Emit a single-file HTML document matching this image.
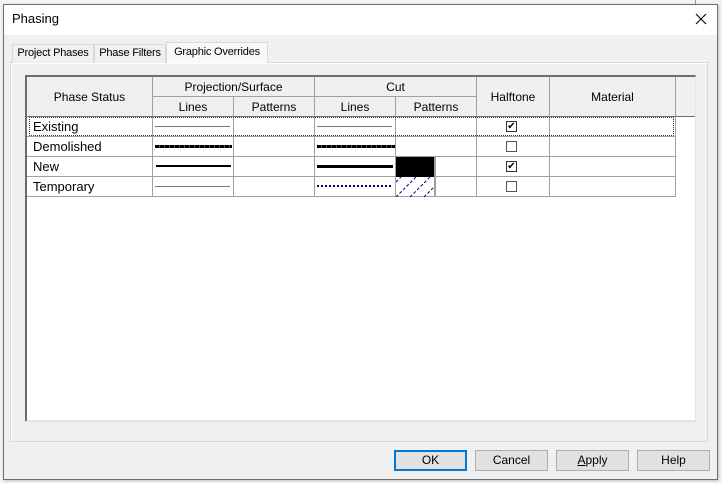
<!DOCTYPE html>
<html><head><style>
*{margin:0;padding:0;box-sizing:border-box}
body{width:722px;height:483px;background:#f3f3f3;position:relative;overflow:hidden;font-family:"Segoe UI","Liberation Sans",sans-serif;font-size:12px;color:#000}
.a{position:absolute}
.dlg{left:3px;top:4px;width:715px;height:476px;border:1px solid #6d6d6d;background:#f0f0f0;box-shadow:1px 1px 3px rgba(0,0,0,.2)}
.title{left:4px;top:5px;width:713px;height:30px;background:#fff}
.tab{top:44px;height:19px;border:1px solid #d9d9d9;border-bottom:none;background:#f0f0f0;text-align:center;line-height:17px;font-size:11px;letter-spacing:-0.2px}
.panel{left:10px;top:62px;width:698px;height:380px;border:1px solid #d9d9d9;background:#f0f0f0;box-shadow:inset 1px 1px 0 #fff}
.grid{left:25px;top:75px;width:671px;height:347px;border-left:2px solid #6d6d6d;border-top:2px solid #6d6d6d;border-right:1px solid #e3e3e3;border-bottom:2px solid #e3e3e3;background:#fff}
.h{background:#f0f0f0;border-right:1px solid #a0a0a0;border-bottom:1px solid #a0a0a0;text-align:center;font-size:12px}
.c{border-right:1px solid #a0a0a0;border-bottom:1px solid #a0a0a0;background:#fff}
.btn{top:450px;width:73px;height:21px;border:1px solid #adadad;background:#e1e1e1;text-align:center;line-height:19px;font-size:12px}
.cb{width:11px;height:11px;border:1px solid #333;background:#fff;font-size:10px;line-height:9px;text-align:center}
.ln{position:absolute}
</style></head><body>
<div class="a" style="left:695px;top:0;width:1px;height:4px;background:#999"></div>
<div class="a dlg"></div>
<div class="a title"></div>
<div class="a" style="left:12px;top:11px;font-size:13px">Phasing</div>
<svg class="a" style="left:695px;top:13px" width="12" height="12"><path d="M1 1L11 11M11 1L1 11" stroke="#000" stroke-width="1.1"/></svg>
<div class="a panel"></div>
<div class="a tab" style="left:12px;width:82px">Project Phases</div>
<div class="a tab" style="left:94px;width:72px">Phase Filters</div>
<div class="a tab" style="left:166px;top:42px;height:21px;width:102px;background:#f9f9f9;line-height:18px">Graphic Overrides</div>
<div class="a grid"></div>
<div class="a h" style="left:27px;top:77px;width:126px;height:40px;line-height:40px;border-bottom:1px solid #6d6d6d">Phase Status</div>
<div class="a h" style="left:153px;top:77px;width:162px;height:20px;line-height:20px">Projection/Surface</div>
<div class="a h" style="left:153px;top:97px;width:81px;height:20px;line-height:20px;border-bottom:1px solid #6d6d6d">Lines</div>
<div class="a h" style="left:234px;top:97px;width:81px;height:20px;line-height:20px;border-bottom:1px solid #6d6d6d">Patterns</div>
<div class="a h" style="left:315px;top:77px;width:162px;height:20px;line-height:20px">Cut</div>
<div class="a h" style="left:315px;top:97px;width:81px;height:20px;line-height:20px;border-bottom:1px solid #6d6d6d">Lines</div>
<div class="a h" style="left:396px;top:97px;width:81px;height:20px;line-height:20px;border-bottom:1px solid #6d6d6d">Patterns</div>
<div class="a h" style="left:477px;top:77px;width:73px;height:40px;line-height:40px;border-bottom:1px solid #6d6d6d">Halftone</div>
<div class="a h" style="left:550px;top:77px;width:126px;height:40px;line-height:40px;border-bottom:1px solid #6d6d6d">Material</div>
<div class="a h" style="left:676px;top:77px;width:19px;height:40px;border-right:none;border-bottom:1px solid #6d6d6d"></div>
<div class="a" style="left:27px;top:117px">
<div class="a c" style="left:0;top:0;width:126px;height:20px"></div><div class="a c" style="left:126px;top:0;width:81px;height:20px"></div><div class="a c" style="left:207px;top:0;width:81px;height:20px"></div><div class="a c" style="left:288px;top:0;width:81px;height:20px"></div><div class="a c" style="left:369px;top:0;width:81px;height:20px"></div><div class="a c" style="left:450px;top:0;width:73px;height:20px"></div><div class="a c" style="left:523px;top:0;width:126px;height:20px"></div>
<div class="a c" style="left:0;top:20px;width:126px;height:20px"></div><div class="a c" style="left:126px;top:20px;width:81px;height:20px"></div><div class="a c" style="left:207px;top:20px;width:81px;height:20px"></div><div class="a c" style="left:288px;top:20px;width:81px;height:20px"></div><div class="a c" style="left:369px;top:20px;width:81px;height:20px"></div><div class="a c" style="left:450px;top:20px;width:73px;height:20px"></div><div class="a c" style="left:523px;top:20px;width:126px;height:20px"></div>
<div class="a c" style="left:0;top:40px;width:126px;height:20px"></div><div class="a c" style="left:126px;top:40px;width:81px;height:20px"></div><div class="a c" style="left:207px;top:40px;width:81px;height:20px"></div><div class="a c" style="left:288px;top:40px;width:81px;height:20px"></div><div class="a c" style="left:369px;top:40px;width:81px;height:20px"></div><div class="a c" style="left:450px;top:40px;width:73px;height:20px"></div><div class="a c" style="left:523px;top:40px;width:126px;height:20px"></div>
<div class="a c" style="left:0;top:60px;width:126px;height:20px"></div><div class="a c" style="left:126px;top:60px;width:81px;height:20px"></div><div class="a c" style="left:207px;top:60px;width:81px;height:20px"></div><div class="a c" style="left:288px;top:60px;width:81px;height:20px"></div><div class="a c" style="left:369px;top:60px;width:81px;height:20px"></div><div class="a c" style="left:450px;top:60px;width:73px;height:20px"></div><div class="a c" style="left:523px;top:60px;width:126px;height:20px"></div>
</div>
<div class="a" style="left:29px;top:117px;width:645px;height:19px;border:1px dotted #333"></div>
<div class="a" style="left:33px;top:119px;font-size:13px">Existing</div>
<div class="a" style="left:33px;top:139px;font-size:13px">Demolished</div>
<div class="a" style="left:33px;top:159px;font-size:13px">New</div>
<div class="a" style="left:33px;top:179px;font-size:13px">Temporary</div>
<div class="ln" style="left:155px;top:126px;width:75px;height:1px;background:#777"></div>
<div class="ln" style="left:317px;top:126px;width:75px;height:1px;background:#777"></div>
<div class="ln" style="left:155px;top:145px;width:77px;height:3px;background:repeating-linear-gradient(90deg,#000 0 4px,#555 4px 5px)"></div>
<div class="ln" style="left:317px;top:145px;width:78px;height:3px;background:repeating-linear-gradient(90deg,#000 0 4px,#555 4px 5px)"></div>
<div class="ln" style="left:156px;top:165px;width:75px;height:2px;background:#000"></div>
<div class="ln" style="left:317px;top:165px;width:76px;height:3px;background:#000"></div>
<div class="ln" style="left:155px;top:186px;width:75px;height:1px;background:#777"></div>
<div class="ln" style="left:317px;top:185px;width:75px;height:2px;background:repeating-linear-gradient(90deg,#00007a 0 2px,transparent 2px 4px)"></div>
<div class="ln" style="left:396px;top:157px;width:38px;height:20px;background:#000"></div>
<div class="ln" style="left:434px;top:157px;width:2px;height:40px;background:#a0a0a0"></div>
<svg class="a" style="left:396px;top:177px" width="38" height="20"><path d="M0 20L20 0M14 20L34 0M28 20L38 10M0 5L5 0" stroke="#00008b" stroke-width="1" stroke-dasharray="3 2"/></svg>
<div class="a cb" style="left:506px;top:121px">✔</div>
<div class="a cb" style="left:506px;top:141px;border-color:#555"></div>
<div class="a cb" style="left:506px;top:161px">✔</div>
<div class="a cb" style="left:506px;top:181px;border-color:#555"></div>
<div class="a btn" style="left:394px;border:2px solid #0078d7;line-height:17px">OK</div>
<div class="a btn" style="left:475px">Cancel</div>
<div class="a btn" style="left:556px"><u>A</u>pply</div>
<div class="a btn" style="left:637px">Help</div>
</body></html>
